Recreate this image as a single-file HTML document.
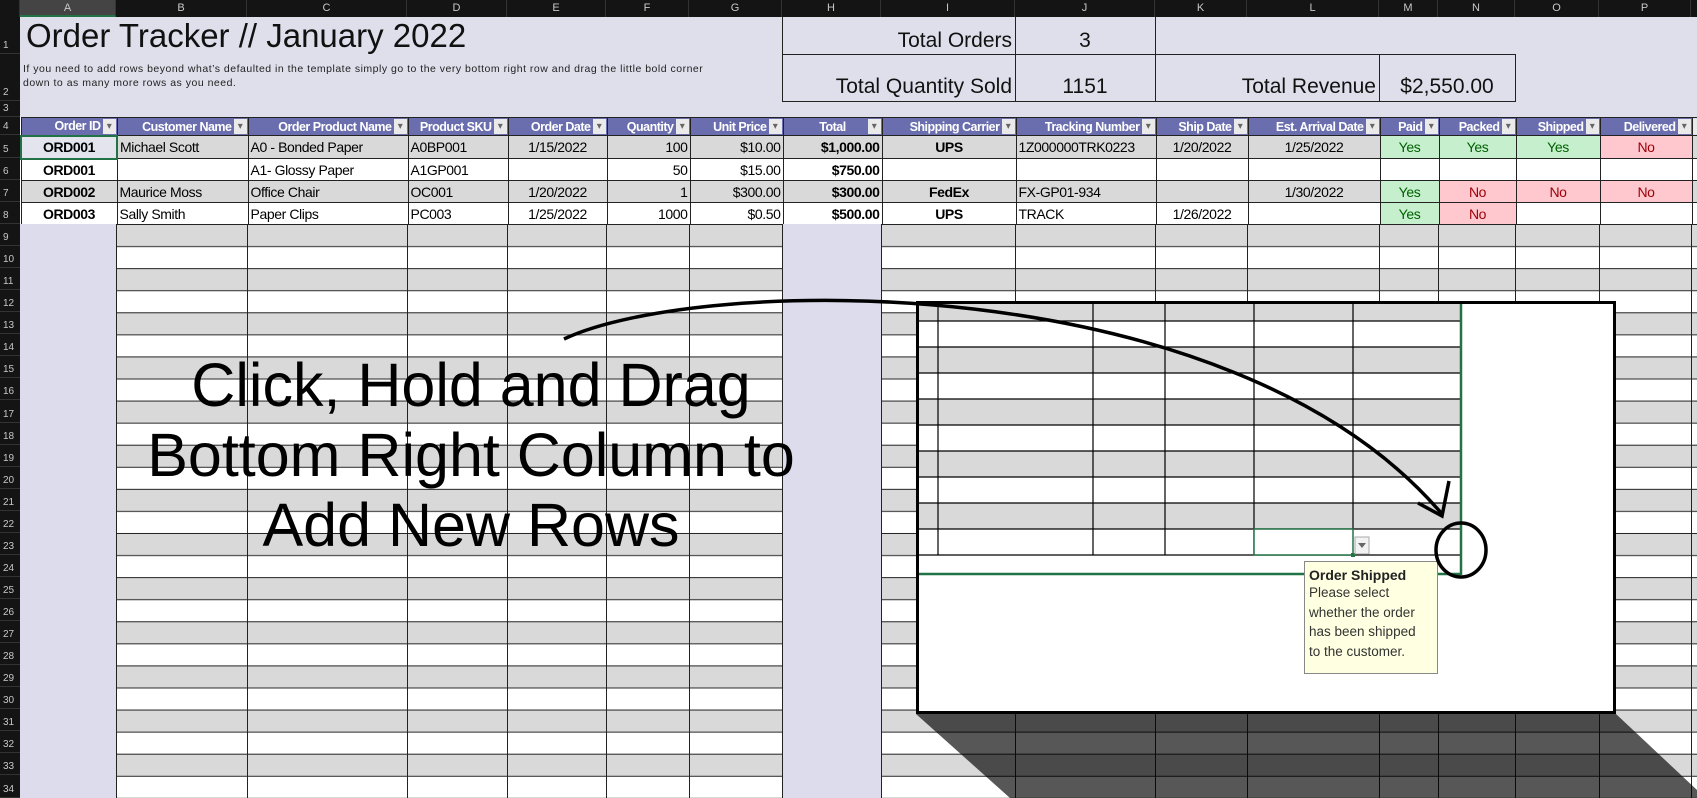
<!DOCTYPE html>
<html><head><meta charset="utf-8">
<style>
*{margin:0;padding:0;box-sizing:border-box}
body{width:1697px;height:798px;overflow:hidden;background:#fff;position:relative;font-family:"Liberation Sans Narrow","Liberation Sans",sans-serif}
.abs{position:absolute}
#colhdr{left:0;top:0;width:1697px;height:17px;background:#141414}
#colhdr div{position:absolute;top:0;height:17px;line-height:17px;text-align:center;color:#c8c8c8;font-size:11px;font-family:"Liberation Sans",sans-serif;border-right:1px solid #333}
#rowhdr{left:0;top:17px;width:20px;height:781px;background:#141414}
#rowhdr div{position:absolute;left:0;width:20px;color:#c8c8c8;font-size:10px;font-family:"Liberation Sans",sans-serif;padding-left:3px;border-bottom:1px solid #333;display:flex;align-items:flex-end;padding-bottom:2px}
#top{left:20px;top:17px;width:1677px;height:100px;background:#dfdfec}
table{position:absolute;left:20px;top:117px;border-collapse:collapse;table-layout:fixed;width:1677px}
td{border:1px solid #222;font-size:14px;letter-spacing:-0.4px;white-space:nowrap;overflow:hidden;padding:0 2px;color:#000}
tr.h td{background:#6b6eae;color:#fff;font-weight:bold;font-size:12.5px;letter-spacing:-0.5px;height:18px;text-align:right;padding-right:16px;position:relative}
tr.h td:after{content:"▾";position:absolute;right:1px;top:1px;width:13px;height:15px;background:#eaeaea;color:#666;font-size:10px;line-height:15px;text-align:center;font-weight:normal}
tr.g td{background:#d9d9d9}
tr.w td{background:#fff}
.c{text-align:center}.r{text-align:right}.b{font-weight:bold}
.y{background:#c6efce!important;color:#006100!important;text-align:center}
.n{background:#ffc7ce!important;color:#9c0006!important;text-align:center}
.t{font-family:"Liberation Sans",sans-serif;font-size:21px;color:#111;position:absolute;white-space:nowrap}
</style></head><body>
<div id="colhdr" class="abs">
<div style="left:0;width:20px"></div>
<div style="left:20px;width:96px;background:#444;border-bottom:2px solid #217346">A</div>
<div style="left:116px;width:131px">B</div>
<div style="left:247px;width:160px">C</div>
<div style="left:407px;width:100px">D</div>
<div style="left:507px;width:99px">E</div>
<div style="left:606px;width:83px">F</div>
<div style="left:689px;width:93px">G</div>
<div style="left:782px;width:99px">H</div>
<div style="left:881px;width:134px">I</div>
<div style="left:1015px;width:140px">J</div>
<div style="left:1155px;width:92px">K</div>
<div style="left:1247px;width:132px">L</div>
<div style="left:1379px;width:59px">M</div>
<div style="left:1438px;width:77px">N</div>
<div style="left:1515px;width:84px">O</div>
<div style="left:1599px;width:92px">P</div>
</div>
<div id="rowhdr" class="abs">
<div style="top:0;height:37px">1</div><div style="top:37px;height:47px">2</div><div style="top:84px;height:16px">3</div><div style="top:100px;height:18px">4</div><div style="top:118px;height:23px">5</div>
<div style="top:141px;height:22px">6</div><div style="top:163px;height:22px">7</div><div style="top:185px;height:22px">8</div><div style="top:207px;height:22px">9</div><div style="top:229px;height:22px">10</div><div style="top:251px;height:22px">11</div><div style="top:273px;height:22px">12</div><div style="top:295px;height:22px">13</div><div style="top:317px;height:22px">14</div><div style="top:339px;height:22px">15</div><div style="top:361px;height:22px">16</div><div style="top:384px;height:22px">17</div><div style="top:406px;height:22px">18</div><div style="top:428px;height:22px">19</div><div style="top:450px;height:22px">20</div><div style="top:472px;height:22px">21</div><div style="top:494px;height:22px">22</div><div style="top:516px;height:22px">23</div><div style="top:538px;height:22px">24</div><div style="top:560px;height:22px">25</div><div style="top:582px;height:22px">26</div><div style="top:604px;height:22px">27</div><div style="top:626px;height:22px">28</div><div style="top:648px;height:22px">29</div><div style="top:670px;height:22px">30</div><div style="top:692px;height:22px">31</div><div style="top:714px;height:22px">32</div><div style="top:736px;height:22px">33</div><div style="top:758px;height:23px">34</div>
</div>
<div id="top" class="abs"></div>
<div class="abs" style="left:26px;top:17px;font-family:'Liberation Sans',sans-serif;font-size:33px;color:#111">Order Tracker // January 2022</div>
<div class="abs" style="left:23px;top:62px;font-family:'Liberation Sans',sans-serif;font-size:10.5px;letter-spacing:0.5px;line-height:14px;color:#222;width:760px;white-space:nowrap">If you need to add rows beyond what’s defaulted in the template simply go to the very bottom right row and drag the little bold corner<br>down to as many more rows as you need.</div>
<div class="abs" style="left:782px;top:17px;width:374px;height:85px;border:1px solid #222;border-top:none"></div>
<div class="abs" style="left:1015px;top:17px;width:1px;height:85px;background:#222"></div>
<div class="abs" style="left:782px;top:54px;width:734px;height:1px;background:#222"></div>
<div class="abs" style="left:1155px;top:54px;width:361px;height:48px;border:1px solid #222;border-left:none"></div>
<div class="abs" style="left:1379px;top:54px;width:1px;height:48px;background:#222"></div>
<div class="t" style="right:685px;top:29px">Total Orders</div>
<div class="t" style="left:1015px;width:140px;text-align:center;top:29px">3</div>
<div class="t" style="right:685px;top:75px">Total Quantity Sold</div>
<div class="t" style="left:1015px;width:140px;text-align:center;top:75px">1151</div>
<div class="t" style="right:321px;top:75px">Total Revenue</div>
<div class="t" style="left:1379px;width:136px;text-align:center;top:75px">$2,550.00</div>
<table>
<colgroup><col style="width:96px"><col style="width:131px"><col style="width:160px"><col style="width:100px"><col style="width:99px"><col style="width:83px"><col style="width:93px"><col style="width:99px"><col style="width:134px"><col style="width:140px"><col style="width:92px"><col style="width:132px"><col style="width:59px"><col style="width:77px"><col style="width:84px"><col style="width:92px"><col style="width:6px"></colgroup>
<tr class="h"><td>Order ID</td><td>Customer Name</td><td>Order Product Name</td><td>Product SKU</td><td>Order Date</td><td>Quantity</td><td>Unit Price</td><td style="text-align:center;padding-right:2px">Total</td><td>Shipping Carrier</td><td>Tracking Number</td><td>Ship Date</td><td>Est. Arrival Date</td><td>Paid</td><td>Packed</td><td>Shipped</td><td>Delivered</td><td style="background:#dfdfec"></td></tr>
<tr class="g" style="height:23px"><td class="c b" style="background:#e4e4ee;border:2px solid #217346">ORD001</td><td>Michael Scott</td><td>A0 - Bonded Paper</td><td>A0BP001</td><td class="c">1/15/2022</td><td class="r">100</td><td class="r">$10.00</td><td class="r b">$1,000.00</td><td class="c b">UPS</td><td>1Z000000TRK0223</td><td class="c">1/20/2022</td><td class="c">1/25/2022</td><td class="y">Yes</td><td class="y">Yes</td><td class="y">Yes</td><td class="n">No</td><td></td></tr>
<tr class="w" style="height:22px"><td class="c b">ORD001</td><td></td><td>A1- Glossy Paper</td><td>A1GP001</td><td></td><td class="r">50</td><td class="r">$15.00</td><td class="r b">$750.00</td><td></td><td></td><td></td><td></td><td></td><td></td><td></td><td></td><td></td></tr>
<tr class="g" style="height:22px"><td class="c b">ORD002</td><td>Maurice Moss</td><td>Office Chair</td><td>OC001</td><td class="c">1/20/2022</td><td class="r">1</td><td class="r">$300.00</td><td class="r b">$300.00</td><td class="c b">FedEx</td><td>FX-GP01-934</td><td></td><td class="c">1/30/2022</td><td class="y">Yes</td><td class="n">No</td><td class="n">No</td><td class="n">No</td><td></td></tr>
<tr class="w" style="height:22px"><td class="c b">ORD003</td><td>Sally Smith</td><td>Paper Clips</td><td>PC003</td><td class="c">1/25/2022</td><td class="r">1000</td><td class="r">$0.50</td><td class="r b">$500.00</td><td class="c b">UPS</td><td>TRACK</td><td class="c">1/26/2022</td><td></td><td class="y">Yes</td><td class="n">No</td><td></td><td></td><td></td></tr>
</table>
<svg class="abs" style="left:20px;top:224px" width="1677" height="574">
<defs><pattern id="bd" width="1677" height="44.14" patternUnits="userSpaceOnUse"><rect width="1677" height="22.07" fill="#d9d9d9"/><rect y="22.07" width="1677" height="22.07" fill="#fff"/><rect width="1677" height="1" fill="#222"/><rect y="22.07" width="1677" height="1" fill="#222"/></pattern></defs>
<rect width="1677" height="574" fill="url(#bd)"/>
<rect x="0" width="96" height="574" fill="#dcdcec"/>
<rect x="762" width="99" height="574" fill="#dcdcec"/>
<g fill="#222"><rect x="96" width="1" height="574"/><rect x="227" width="1" height="574"/><rect x="387" width="1" height="574"/><rect x="487" width="1" height="574"/><rect x="586" width="1" height="574"/><rect x="669" width="1" height="574"/><rect x="762" width="1" height="574"/><rect x="861" width="1" height="574"/><rect x="995" width="1" height="574"/><rect x="1135" width="1" height="574"/><rect x="1227" width="1" height="574"/><rect x="1359" width="1" height="574"/><rect x="1418" width="1" height="574"/><rect x="1495" width="1" height="574"/><rect x="1579" width="1" height="574"/><rect x="1671" width="1" height="574"/></g>
</svg>
<svg class="abs" style="left:0;top:0" width="1697" height="798"><polygon points="916,714 1616,714 1697,790 1697,798 1010,798" fill="rgba(0,0,0,0.66)"/></svg>
<div class="abs" style="left:916px;top:301px;width:700px;height:413px;background:#fff;border:3px solid #000;overflow:hidden">
<svg width="694" height="407" style="position:absolute;left:0;top:0">
<g transform="translate(-919,-304)">
<rect x="919" y="304" width="542" height="17" fill="#d9d9d9"/>
<rect x="919" y="347" width="542" height="26" fill="#d9d9d9"/>
<rect x="919" y="399" width="542" height="26" fill="#d9d9d9"/>
<rect x="919" y="451" width="542" height="26" fill="#d9d9d9"/>
<rect x="919" y="503" width="542" height="26" fill="#d9d9d9"/>
<g stroke="#000" stroke-width="1.2">
<line x1="919" y1="321" x2="1461" y2="321"/><line x1="919" y1="347" x2="1461" y2="347"/><line x1="919" y1="373" x2="1461" y2="373"/><line x1="919" y1="399" x2="1461" y2="399"/><line x1="919" y1="425" x2="1461" y2="425"/><line x1="919" y1="451" x2="1461" y2="451"/><line x1="919" y1="477" x2="1461" y2="477"/><line x1="919" y1="503" x2="1461" y2="503"/><line x1="919" y1="529" x2="1461" y2="529"/><line x1="919" y1="555" x2="1461" y2="555"/>
<line x1="938" y1="304" x2="938" y2="555"/><line x1="1093" y1="304" x2="1093" y2="555"/><line x1="1165" y1="304" x2="1165" y2="555"/><line x1="1254" y1="304" x2="1254" y2="555"/><line x1="1353" y1="304" x2="1353" y2="529"/>
</g>
<line x1="1461" y1="304" x2="1461" y2="575" stroke="#217346" stroke-width="2.5"/>
<line x1="919" y1="574" x2="1461" y2="574" stroke="#217346" stroke-width="2.5"/>
<rect x="1254" y="529" width="99" height="26" fill="#fff" stroke="#217346" stroke-width="1.5"/>
<rect x="1351" y="553" width="4" height="4" fill="#217346"/>
<rect x="1355" y="537" width="14" height="17" fill="#f2f2f2" stroke="#aaa"/>
<path d="M1358 543 L1366 543 L1362 548Z" fill="#666"/>
</g></svg>
</div>
<div class="abs" style="left:1304px;top:561px;width:134px;height:113px;background:#ffffe1;border:1px solid #888;font-family:'Liberation Sans',sans-serif;padding:5px 0 0 4px">
<div style="font-weight:bold;font-size:14px;line-height:16px;color:#222">Order Shipped</div>
<div style="font-size:13.5px;line-height:19.5px;color:#333">Please select<br>whether the order<br>has been shipped<br>to the customer.</div>
</div>
<svg class="abs" style="left:0;top:0" width="1697" height="798" fill="none" stroke="#000">
<path d="M564 339 C 700 275, 1230 265, 1442 514" stroke-width="3.5"/>
<path d="M1449 481 L1442 516 L1418 503" stroke-width="3.5"/>
<ellipse cx="1461" cy="550" rx="25" ry="27" stroke-width="3.5"/>
</svg>
<div class="abs" style="left:40px;top:350px;width:862px;text-align:center;font-family:'Liberation Sans',sans-serif;font-size:61px;line-height:70px;color:#000">Click, Hold and Drag<br>Bottom Right Column to<br>Add New Rows</div>
</body></html>
